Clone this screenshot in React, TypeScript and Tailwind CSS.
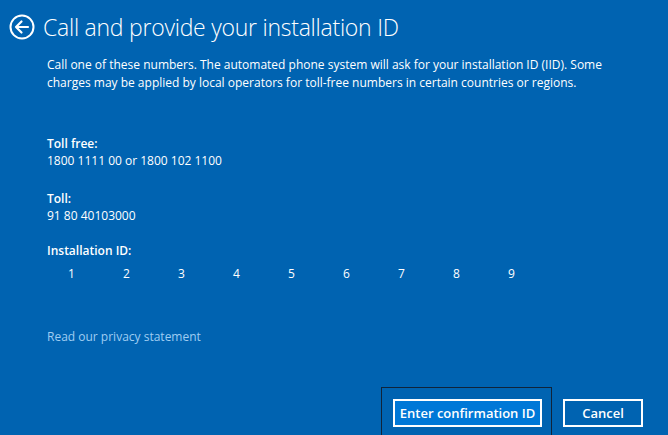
import React from "react";

const font = { fontFamily: '"Open Sans", "Noto Sans", sans-serif' };

const BackIcon = () => (
  <svg width="26" height="26" viewBox="0 0 26 26" fill="none">
    <circle cx="13" cy="13" r="11.5" stroke="white" strokeWidth="2" />
    <path
      d="M7 13h12M12.5 7.5L7 13l5.5 5.5"
      stroke="white"
      strokeWidth="2.2"
      strokeLinecap="round"
      strokeLinejoin="round"
    />
  </svg>
);

const Field = ({ label, value }: { label: string; value: string }) => (
  <div className="flex flex-col leading-[17px]">
    <span className="font-semibold">{label}</span>
    <span>{value}</span>
  </div>
);

export default function App() {
  const digits = ["1", "2", "3", "4", "5", "6", "7", "8", "9"];

  return (
    <div
      className="w-[668px] h-[435px] overflow-hidden bg-[#0063b1] text-white flex flex-col"
      style={font}
    >
      <div className="flex items-center gap-[8px] pl-[9px] pt-[14px]">
        <BackIcon />
        <h1 className="text-[23px] font-light leading-[26px] tracking-[-0.25px]">
          Call and provide your installation ID
        </h1>
      </div>

      <div className="pl-[47px] pr-[48px] text-[12px]">
        <p className="mt-[16px] leading-[18px]">
          Call one of these numbers. The automated phone system will ask for
          your installation ID (IID). Some charges may be applied by local
          operators for toll-free numbers in certain countries or regions.
        </p>

        <div className="mt-[43px] flex flex-col gap-[21px]">
          <Field label="Toll free:" value="1800 1111 00 or 1800 102 1100" />
          <Field label="Toll:" value="91 80 40103000" />
        </div>

        <div className="mt-[18px]">
          <div className="font-semibold leading-[17px]">Installation ID:</div>
          <div className="flex -ml-[3px] mt-[6px] leading-[17px]">
            {digits.map((d) => (
              <div key={d} className="w-[55px] text-center">
                {d}
              </div>
            ))}
          </div>
        </div>

        <a className="block mt-[46px] text-[#9fcdf2] leading-[17px]">
          Read our privacy statement
        </a>
      </div>

      <div className="mt-auto flex justify-end items-start pr-[25px]">
        <div className="border border-[#10243a] border-b-0 pl-[11px] pr-[9px] pt-[11px] pb-[8px]">
          <button className="w-[149px] h-[28px] bg-[#0078d7] border-2 border-white text-[13px] font-semibold leading-none">
            Enter confirmation ID
          </button>
        </div>
        <button className="ml-[11px] mt-[12px] mb-[8px] w-[80px] h-[28px] border-2 border-white text-[13px] font-semibold leading-none">
          Cancel
        </button>
      </div>
    </div>
  );
}
